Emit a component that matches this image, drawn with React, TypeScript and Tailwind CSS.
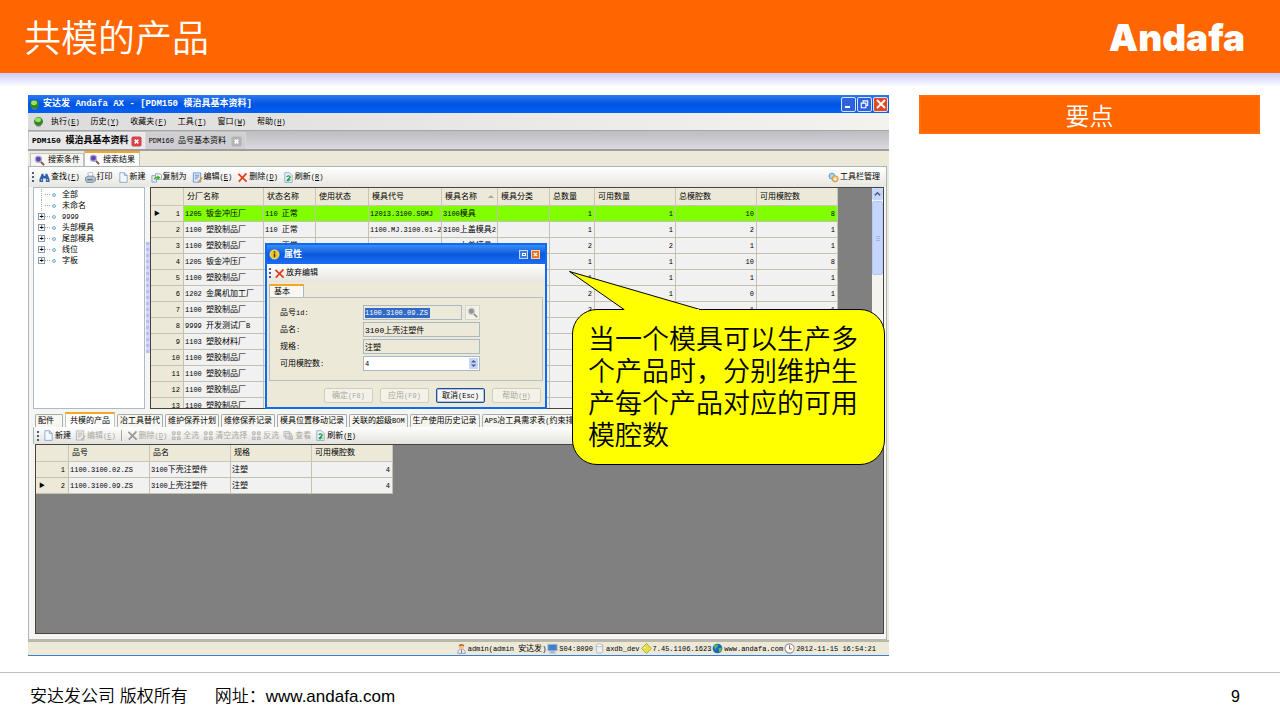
import React from "react"

const UI_FONT = "font-['Liberation_Mono','Noto_Sans_CJK_SC',monospace]"
const SLIDE_FONT = "font-['Noto_Sans_CJK_SC',sans-serif]"

// Latin runs are set one size smaller than the Chinese ones; "(X)" marks an access key.
function Txt({ children }: { children: string }) {
  const parts = children.split(/([\x20-\x7e]+)/).filter(Boolean)
  return (
    <span className="whitespace-pre">
      {parts.map((part, i) => {
        if (!/^[\x20-\x7e]+$/.test(part)) return <span key={i}>{part}</span>
        const key = part.match(/^\(([A-Z])\)$/)
        return (
          <span key={i} className="text-[7px]">
            {key ? <>(<u>{key[1]}</u>)</> : part}
          </span>
        )
      })}
    </span>
  )
}

type IconName =
  | "ball" | "search" | "find" | "print" | "doc" | "copy" | "edit" | "delete" | "refresh"
  | "gears" | "info" | "user" | "monitor" | "db" | "tag" | "globe" | "clock" | "all" | "view"

const shapes: Record<IconName, React.ReactNode> = {
  ball: (
    <>
      <ellipse cx="6" cy="6" rx="4.9" ry="4.8" fill="#2f8a1e" />
      <ellipse cx="5.5" cy="4.2" rx="3.2" ry="2.6" fill="#9be06a" />
      <path d="M3 10h6l-1 1.5H4z" fill="#777" />
    </>
  ),
  search: (
    <>
      <path d="M7 7l4 4" stroke="#7a5236" strokeWidth="2" />
      <circle cx="4.8" cy="4.6" r="3.4" fill="#5c46b8" stroke="#b9b4d6" strokeWidth="1.4" />
    </>
  ),
  find: (
    <>
      <path d="M3 2h2v2h2V2h2l2.5 6v3H7.500V7h-3v4H.5V8z" fill="#2f62a8" />
      <path d="M2 8.500h1.500M8.500 8.500H10" stroke="#bcd6f5" strokeWidth="1.4" />
    </>
  ),
  print: (
    <>
      <path d="M3 1l5-.5 1 5H4z" fill="#fff" stroke="#8da4bf" strokeWidth=".7" />
      <path d="M.5 6l3-1.500h6l2 2v3l-3 2H2L.5 9z" fill="#b5bfcc" stroke="#67778c" strokeWidth=".8" />
      <path d="M2.500 8.500h6" stroke="#41669a" strokeWidth="1.2" />
    </>
  ),
  doc: <path d="M2 .8h5l3 3v7.500H2zM7 .8v3h3" fill="#f3f8ff" stroke="#7e9fc9" strokeWidth=".9" />,
  copy: (
    <>
      <path d="M1 4h5v7H1z" fill="#e7edf7" stroke="#7e93bd" strokeWidth=".9" />
      <path d="M5 2h5l1.500 1.500V8H5z" fill="#fff" stroke="#7e93bd" strokeWidth=".9" />
      <path d="M3 9c0-3 2-4 4-4V3.500L10.500 6 7 8.800V7.200C5.500 7.200 4 7.500 3 9z" fill="#3fae2b" />
    </>
  ),
  edit: (
    <>
      <path d="M1.500 1h8v10h-8z" fill="#eaf3ff" stroke="#4f86cd" strokeWidth=".9" />
      <path d="M3 3.500h5M3 5.500h5M3 7.500h3" stroke="#4f86cd" />
      <path d="M6 10.500l4.500-5 1.200 1.200-4.200 4.500z" fill="#f08b24" />
    </>
  ),
  delete: <path d="M1.500 2L10.500 10.500M10.300 1.500L2 10.500" stroke="#e23d1d" strokeWidth="1.900" />,
  refresh: (
    <>
      <path d="M2 .8h5l3 3v7.500H2z" fill="#eef5ff" stroke="#7e9fc9" strokeWidth=".9" />
      <path d="M4 5.500c.5-1.800 3.500-1.800 4 0l-3 3H8.300M4.200 8.500L6 10.200" stroke="#1e9c33" strokeWidth="1.300" fill="none" />
    </>
  ),
  gears: (
    <>
      <circle cx="4.300" cy="4.500" r="3.200" fill="#a9d4ee" stroke="#4f9ac6" />
      <circle cx="7.800" cy="7.500" r="3.300" fill="#f3cf8a" stroke="#c99646" />
      <circle cx="7.800" cy="7.500" r="1" fill="#fff" />
    </>
  ),
  info: (
    <>
      <circle cx="6" cy="6" r="5" fill="#f6c51c" stroke="#fff3b0" strokeWidth=".8" />
      <path d="M6 2.500v1.500M6 5v4" stroke="#3a3520" strokeWidth="1.600" />
    </>
  ),
  user: (
    <>
      <path d="M2 11.500c0-4 1.500-5 4-5s4 1 4 5z" fill="#dfe9f8" stroke="#6a87b5" strokeWidth=".7" />
      <path d="M6 7v4" stroke="#d2502a" />
      <circle cx="6" cy="4" r="2.800" fill="#f1c08e" />
      <path d="M3 3.500C3 .3 9 .3 9 3.500 7 2.500 5 3 3 3.500z" fill="#b0692a" />
    </>
  ),
  monitor: (
    <>
      <path d="M1 1.500h10v7H1z" fill="#3f7fd0" stroke="#9fb5d0" />
      <path d="M4 8.500h4v1.500h1.500v1.500h-7V10H4z" fill="#a9b6c6" />
    </>
  ),
  db: (
    <>
      <path d="M2.500 2.500v7c0 2 7 2 7 0v-7" fill="#eceef2" stroke="#a0a5b0" strokeWidth=".8" />
      <ellipse cx="6" cy="2.500" rx="3.500" ry="1.500" fill="#fff" stroke="#a0a5b0" strokeWidth=".8" />
    </>
  ),
  tag: (
    <>
      <path d="M6 .5L11.500 6 6 11.500.5 6z" fill="#e3df4c" stroke="#a19a25" strokeWidth=".8" />
      <circle cx="4" cy="5" r=".9" fill="#fff" />
    </>
  ),
  globe: (
    <>
      <circle cx="6" cy="6" r="5.300" fill="#1f66c4" />
      <path d="M2 3c2-2 4-1.500 5-.5L5 5 3.500 7.500zM7 6l3.500-1v3L8 10.500z" fill="#58c046" />
    </>
  ),
  clock: (
    <>
      <circle cx="6" cy="6" r="5" fill="#fff" stroke="#8f949e" strokeWidth="1.200" />
      <path d="M6 2.500V6.500H8.500" stroke="#c03a2a" fill="none" />
    </>
  ),
  all: <path d="M1.500 2h3v3h-3zM7 2h3v3H7zM1.500 7.500h3v3h-3zM7 7.500h3v3H7z" fill="#d4d4cf" stroke="#888" />,
  view: (
    <>
      <path d="M1 1.500h6v6H1zM3 3.500h6v6H3z" fill="#deded8" stroke="#888" strokeWidth=".9" />
      <path d="M6 6h5v5H6z" fill="#a8a8a2" />
    </>
  ),
}

function Icon({ name, off }: { name: IconName; off?: boolean }) {
  return (
    <svg viewBox="0 0 12 12" className={off ? "size-[11px] shrink-0 opacity-60 grayscale" : "size-[11px] shrink-0"}>
      {shapes[name]}
    </svg>
  )
}

interface ToolItem {
  icon: IconName
  label: string
  off?: boolean
}

function ToolButton({ icon, label, off }: ToolItem) {
  return (
    <button
      type="button"
      disabled={off}
      className={off ? "flex shrink-0 items-center gap-px text-[#aaa89c]" : "flex shrink-0 items-center gap-px"}
    >
      <Icon name={icon} off={off} />
      <Txt>{label}</Txt>
    </button>
  )
}

function Grip() {
  return <span className="h-[10px] w-0 border-l-2 border-dotted border-[#4b5a86]" />
}

const menus = ["执行(E)", "历史(Y)", "收藏夹(F)", "工具(T)", "窗口(W)", "帮助(H)"]

const tools: ToolItem[] = [
  { icon: "find", label: "查找(F)" },
  { icon: "print", label: "打印" },
  { icon: "doc", label: "新建" },
  { icon: "copy", label: "复制为" },
  { icon: "edit", label: "编辑(E)" },
  { icon: "delete", label: "删除(D)" },
  { icon: "refresh", label: "刷新(R)" },
]

const detailTools: ToolItem[] = [
  { icon: "delete", label: "删除(D)", off: true },
  { icon: "all", label: "全选", off: true },
  { icon: "all", label: "清空选择", off: true },
  { icon: "all", label: "反选", off: true },
  { icon: "view", label: "查看", off: true },
  { icon: "refresh", label: "刷新(R)" },
]

const tree = ["全部", "未命名", "9999", "头部模具", "尾部模具", "线位", "字板"]

const columns = [
  { title: "分厂名称", width: "w-[80px]" },
  { title: "状态名称", width: "w-[52px]" },
  { title: "使用状态", width: "w-[53px]" },
  { title: "模具代号", width: "w-[73px]" },
  { title: "模具名称", width: "w-[56px]" },
  { title: "模具分类", width: "w-[52px]" },
  { title: "总数量", width: "w-[45px]" },
  { title: "可用数量", width: "w-[81px]" },
  { title: "总模腔数", width: "w-[81px]" },
  { title: "可用模腔数", width: "w-[81px]" },
]

const molds = [
  ["1205 钣金冲压厂", "110 正常", "", "12013.3100.SGMJ", "3100模具", "", "1", "1", "10", "8"],
  ["1100 塑胶制品厂", "110 正常", "", "1100.MJ.3100.01-2", "3100上盖模具2", "", "1", "1", "2", "1"],
  ["1100 塑胶制品厂", "110 正常", "", "1100.MJ.3100.01-3", "3100上盖模具3", "", "2", "2", "1", "1"],
  ["1205 钣金冲压厂", "", "", "", "", "", "1", "1", "10", "8"],
  ["1100 塑胶制品厂", "", "", "", "", "", "1", "1", "1", "1"],
  ["1202 金属机加工厂", "", "", "", "", "", "2", "1", "0", "1"],
  ["1100 塑胶制品厂", "", "", "", "", "", "2", "2", "1", "1"],
  ["9999 开发测试厂B", "", "", "", "", "", "", "", "", ""],
  ["1103 塑胶材料厂", "", "", "", "", "", "", "", "", ""],
  ["1100 塑胶制品厂", "", "", "", "", "", "", "", "", ""],
  ["1100 塑胶制品厂", "", "", "", "", "", "", "", "", ""],
  ["1100 塑胶制品厂", "", "", "", "", "", "", "", "", ""],
  ["1100 塑胶制品厂", "", "", "", "", "", "", "", "", ""],
]

const products = [
  ["1100.3100.02.ZS", "3100下壳注塑件", "注塑", "4"],
  ["1100.3100.09.ZS", "3100上壳注塑件", "注塑", "4"],
]

const detailTabs = [
  "配件", "共模的产品", "冶工具替代", "维护保养计划", "维修保养记录",
  "模具位置移动记录", "关联的超级BOM", "生产使用历史记录", "APS冶工具需求表(约束排程)",
]

const headCell = "border-r border-b border-[#c9c6b6] bg-[#ece9d8] p-0 text-left font-normal"

function RowHead({ n, current }: { n: number; current: boolean }) {
  return (
    <th scope="row" className="h-4 border-r border-b border-[#c4c1af] bg-[#ece9d8] p-0 font-normal">
      <span className="flex items-center justify-between px-[3px]">
        <span className="text-[6px]">{current ? "▶" : ""}</span>
        <Txt>{String(n)}</Txt>
      </span>
    </th>
  )
}

function MoldGrid() {
  return (
    <table className="w-[687px] shrink-0 table-fixed border-separate border-spacing-0 self-start">
      <thead>
        <tr className="h-[18px]">
          <th className={`${headCell} w-[33px]`} />
          {columns.map((c) => (
            <th key={c.title} className={`${headCell} ${c.width}`}>
              <span className="flex items-center justify-between px-[3px]">
                <Txt>{c.title}</Txt>
                {c.title === "模具名称" && (
                  <span className="border-x-[3px] border-b-[3px] border-x-transparent border-b-[#aca899]" />
                )}
              </span>
            </th>
          ))}
        </tr>
      </thead>
      <tbody>
        {molds.map((row, r) => (
          <tr key={r} className={r === 0 ? "bg-[#80ff00]" : "bg-[#f1f1f1]"}>
            <RowHead n={r + 1} current={r === 0} />
            {row.map((cell, c) => (
              <td
                key={c}
                className={
                  c > 5
                    ? "h-4 overflow-hidden border-r border-b border-[#c4c1af] p-0 pr-[2px] text-right"
                    : "h-4 overflow-hidden border-r border-b border-[#c4c1af] p-0 pl-px"
                }
              >
                <Txt>{cell}</Txt>
              </td>
            ))}
          </tr>
        ))}
      </tbody>
    </table>
  )
}

function ProductGrid() {
  return (
    <table className="w-[357px] table-fixed border-separate border-spacing-0">
      <thead>
        <tr className="h-[17px]">
          <th className={`${headCell} w-[33px]`} />
          {["品号", "品名", "规格", "可用模腔数"].map((t) => (
            <th key={t} className={`${headCell} w-[81px] pl-[3px]`}>
              <Txt>{t}</Txt>
            </th>
          ))}
        </tr>
      </thead>
      <tbody>
        {products.map((row, r) => (
          <tr key={r} className="bg-[#f1f1f1]">
            <RowHead n={r + 1} current={r === 1} />
            {row.map((cell, c) => (
              <td
                key={c}
                className={
                  c === 3
                    ? "h-4 border-r border-b border-[#c4c1af] p-0 pr-[2px] text-right"
                    : "h-4 border-r border-b border-[#c4c1af] p-0 pl-px"
                }
              >
                <Txt>{cell}</Txt>
              </td>
            ))}
          </tr>
        ))}
      </tbody>
    </table>
  )
}

function Tree() {
  return (
    <ul className="w-[112px] shrink-0 border border-[#a9bccf] bg-white pt-px">
      {tree.map((t, i) => (
        <li key={t} className="flex h-[11px] items-center pl-1">
          {i > 1 ? (
            <span className="flex size-[7px] items-center justify-center border border-[#8b9bb0] bg-white text-[7px] font-bold">+</span>
          ) : (
            <span className="ml-[3px] h-[11px] w-1 border-l border-dotted border-[#aaa]" />
          )}
          <span className="w-[5px] border-t border-dotted border-[#aaa]" />
          <span className="mr-[6px] ml-[2px] size-1 rounded-full border border-[#7fb0cf] bg-[#d8eef8]" />
          <Txt>{t}</Txt>
        </li>
      ))}
    </ul>
  )
}

function Scrollbar() {
  return (
    <div className="ml-auto flex w-[11px] flex-col bg-[#f4f3ee]">
      <div className="flex h-[12px] items-center justify-center rounded-xs bg-[#c6d5fb]">
        <svg viewBox="0 0 8 6" className="w-[7px]">
          <path d="M1 5l3-3 3 3" fill="none" stroke="#4d6185" strokeWidth="1.700" />
        </svg>
      </div>
      <div className="mt-px flex h-[74px] flex-col items-center justify-center gap-px rounded-xs border border-[#b4c8f6] bg-[#c6d5fb]">
        <span className="h-px w-1 bg-[#9db5ee]" />
        <span className="h-px w-1 bg-[#9db5ee]" />
        <span className="h-px w-1 bg-[#9db5ee]" />
      </div>
    </div>
  )
}

const field = "h-[15px] border border-[#a9b8c2] px-px text-[8px] outline-none"

function PropertyDialog() {
  return (
    <div className="flex h-[166px] w-[282px] flex-col border-2 border-[#0d6bf2] bg-[#ece9d8]">
      <div className="flex h-[19px] items-center bg-linear-to-b from-[#3a8cf5] via-[#0a59de] to-[#1c6cf5] px-[2px] text-white">
        <Icon name="info" />
        <span className="ml-1 text-[9px] font-bold">属性</span>
        <button type="button" aria-label="还原" className="ml-auto flex size-[9px] items-center justify-center border border-[#c3d8fb] bg-[#3d7ae6]">
          <span className="h-[3px] w-[4px] border border-white" />
        </button>
        <button type="button" aria-label="关闭" className="mr-[3px] ml-[3px] flex size-[9px] items-center justify-center border border-[#fbd3a0] bg-[#e8701a]">
          <svg viewBox="0 0 6 6" className="size-[5px]">
            <path d="M1 1l4 4M5 1L1 5" stroke="#fff" strokeWidth="1.500" />
          </svg>
        </button>
      </div>
      <div className="flex h-[18px] items-center gap-[3px] bg-linear-to-b from-white to-[#e6e5df] px-[2px]">
        <Grip />
        <ToolButton icon="delete" label="放弃编辑" />
      </div>
      <div className="flex px-[2px] pt-[2px]">
        <span className="flex h-[13px] w-[35px] items-center border-x border-t-2 border-x-[#a9b8c2] border-t-[#f5a623] bg-[#f8f7f2] pl-1">
          <Txt>基本</Txt>
        </span>
      </div>
      <form className="mx-[2px] grid h-[84px] grid-cols-[83px_1fr] content-start gap-y-[2px] border border-[#b3bdc2] pt-[7px] pl-[10px]">
        <label htmlFor="item-id" className="self-center"><Txt>品号id:</Txt></label>
        <div className="flex gap-[3px]">
          <span className={`${field} flex w-[99px] items-center`}>
            <input id="item-id" readOnly defaultValue="1100.3100.09.ZS" className="w-[65px] bg-[#316ac5] text-[7px] text-white outline-none" />
          </span>
          <button type="button" aria-label="查询" className="flex size-[15px] items-center justify-center border border-[#d8d4c4] bg-[#f3f2ea]">
            <Icon name="search" off />
          </button>
        </div>
        <label htmlFor="item-name" className="self-center"><Txt>品名:</Txt></label>
        <input id="item-name" readOnly defaultValue="3100上壳注塑件" className={`${field} w-[117px]`} />
        <label htmlFor="spec" className="self-center"><Txt>规格:</Txt></label>
        <input id="spec" readOnly defaultValue="注塑" className={`${field} w-[117px]`} />
        <label htmlFor="cavities" className="self-center"><Txt>可用模腔数:</Txt></label>
        <div className="flex w-[117px] border border-[#a9b8c2] bg-white">
          <input id="cavities" defaultValue="4" className="h-[13px] min-w-0 flex-1 px-px text-[7px] outline-none" />
          <button type="button" aria-label="调整" className="m-px flex w-[9px] items-center justify-center bg-[#c6d5fb]">
            <svg viewBox="0 0 8 10" className="h-[9px]">
              <path d="M4 1l3 3H1zM4 9L1 6h6z" fill="#4d6185" />
            </svg>
          </button>
        </div>
      </form>
      <div className="mt-[7px] flex justify-end gap-[7px] pr-1">
        {["确定(F8)", "应用(F9)", "取消(Esc)", "帮助(H)"].map((b) => (
          <button
            key={b}
            type="button"
            disabled={b !== "取消(Esc)"}
            className={
              b === "取消(Esc)"
                ? "h-[15px] w-[49px] rounded-xs border border-[#1d4f8c] bg-[#f6f5f0] ring-1 ring-[#a9c3ee] ring-inset"
                : "h-[15px] w-[49px] rounded-xs border border-[#d0cdbd] bg-[#f3f2e8] text-[#aca899]"
            }
          >
            <Txt>{b}</Txt>
          </button>
        ))}
      </div>
    </div>
  )
}

function TitleBar() {
  const ctl = "flex size-[15px] items-center justify-center rounded-xs border border-[#d5e2fb]"
  return (
    <div className="flex h-[18px] items-center bg-linear-to-b from-[#2a78ee] via-[#0054e3] to-[#0461f4] px-px text-white">
      <Icon name="ball" />
      <span className="ml-[3px] text-[9px] font-bold whitespace-pre">安达发 Andafa AX - [PDM150 模治具基本资料]</span>
      <div className="ml-auto flex gap-px">
        <button type="button" aria-label="最小化" className={`${ctl} bg-[#2d62dc]`}>
          <span className="mt-[6px] mr-[3px] h-[2px] w-[5px] bg-white" />
        </button>
        <button type="button" aria-label="还原" className={`${ctl} bg-[#2d62dc]`}>
          <svg viewBox="0 0 12 12" className="size-[11px]">
            <path d="M4.500 4V2h5v5h-2M2.500 4.500h5v5h-5z" fill="none" stroke="#fff" strokeWidth="1.200" />
          </svg>
        </button>
        <button type="button" aria-label="关闭" className={`${ctl} bg-[#e04a22]`}>
          <svg viewBox="0 0 12 12" className="size-[12px]">
            <path d="M2 2l8 8M10 2l-8 8" stroke="#fff" strokeWidth="1.800" />
          </svg>
        </button>
      </div>
    </div>
  )
}

function CloseMark({ active }: { active?: boolean }) {
  return (
    <svg viewBox="0 0 12 12" className="size-[11px]">
      <rect x=".5" y=".5" width="11" height="11" rx="2" fill={active ? "#d8434a" : "#b3b3b3"} />
      <path d="M4 4l4 4M8 4L4 8" stroke="#fff" strokeWidth="1.800" />
    </svg>
  )
}

function StatusItem({ icon, label }: { icon: IconName; label: string }) {
  return (
    <span className="flex items-center gap-px">
      <Icon name={icon} />
      <Txt>{label}</Txt>
    </span>
  )
}

function AppWindow() {
  return (
    <div className={`${UI_FONT} relative flex min-w-0 flex-col bg-[#ece9d8] text-[8px] leading-[10px] text-black`}>
      <TitleBar />
      <nav className="flex h-[17px] items-center gap-[7px] bg-linear-to-r from-[#dcdcdc] to-[#f3f3ee] pl-[5px]">
        <Icon name="ball" />
        <div className="flex gap-[11px]">
          {menus.map((m) => (
            <button key={m} type="button"><Txt>{m}</Txt></button>
          ))}
        </div>
      </nav>
      <div className="flex h-[21px] items-end border-t border-b-2 border-t-[#a6a6a6] border-b-[#9d9d9f] bg-linear-to-b from-[#bdbdc1] to-[#dadade] pl-px">
        <div className="flex h-[17px] items-center gap-[2px] border border-b-0 border-[#eee] bg-[#e9e9ea] px-[2px] font-bold">
          <span className="whitespace-pre">PDM150 <span className="text-[9px]">模治具基本资料</span></span>
          <CloseMark active />
        </div>
        <div className="flex h-[17px] items-center gap-[5px] border border-b-0 border-[#d6d6d8] bg-[#cfcfd2] px-[3px]">
          <Txt>PDM160 品号基本资料</Txt>
          <CloseMark />
        </div>
      </div>
      <div className="flex h-[15px] items-end pl-[2px]">
        <span className="flex h-[13px] items-center gap-[3px] border border-b-0 border-[#bcc4c6] bg-[#f7f6f1] px-[3px]">
          <Icon name="search" />
          <Txt>搜索条件</Txt>
        </span>
        <span className="flex h-[15px] items-center gap-[3px] border-x border-t-2 border-x-[#bcc4c6] border-t-[#f5a623] bg-white px-[4px]">
          <Icon name="search" />
          <Txt>搜索结果</Txt>
        </span>
      </div>
      <div className="mr-[2px] flex flex-1 flex-col border-x border-t border-[#a9b5bd] bg-[#f6f5f0]">
        <div className="flex h-[20px] items-center gap-[5px] bg-linear-to-b from-white to-[#e7e6e0] pr-[6px] pl-[3px]">
          <Grip />
          {tools.map((t) => (
            <ToolButton key={t.label} {...t} />
          ))}
          <div className="ml-auto">
            <ToolButton icon="gears" label="工具栏管理" />
          </div>
        </div>
        <div className="flex h-[222px] overflow-hidden pr-[2px] pl-1">
          <Tree />
          <div className="w-[5px] shrink-0 pt-[55px]">
            <div className="ml-px h-[111px] border-l-3 border-dotted border-[#b9bdf0] bg-[#d5d7fb]" />
          </div>
          <div className="flex min-w-0 flex-1 overflow-hidden border border-[#444] bg-[#808080]">
            <MoldGrid />
            <Scrollbar />
          </div>
        </div>
        <div className="mt-[3px] flex h-[15px] items-end gap-[2px] overflow-hidden pr-[3px] pl-[6px]">
          {detailTabs.map((t) => (
            <span
              key={t}
              className={
                t === "共模的产品"
                  ? "flex h-[15px] shrink-0 items-center border-x border-t-2 border-x-[#bcc4c6] border-t-[#f5a623] bg-white px-1"
                  : t === "配件"
                    ? "flex h-[13px] w-[28px] shrink-0 items-center rounded-t-xs border border-b-0 border-[#a4adb0] bg-[#f7f6f1] px-[2px]"
                    : "flex h-[13px] shrink-0 items-center rounded-t-xs border border-b-0 border-[#a4adb0] bg-[#f7f6f1] px-[2px]"
              }
            >
              <Txt>{t}</Txt>
            </span>
          ))}
        </div>
        <div className="mx-1 flex h-[17px] items-center gap-1 border-l border-[#a9b5bd] bg-linear-to-b from-white to-[#e3e2dc] pl-[3px]">
          <Grip />
          <ToolButton icon="doc" label="新建" />
          <ToolButton icon="edit" label="编辑(E)" off />
          <span className="mx-px h-[11px] w-px bg-[#aaa89c]" />
          {detailTools.map((t) => (
            <ToolButton key={t.label} {...t} />
          ))}
        </div>
        <div className="mr-[2px] ml-[6px] flex-1 border border-[#444] bg-[#808080]">
          <ProductGrid />
        </div>
        <div className="h-[6px] border-b border-[#b8b8b0]" />
      </div>
      <div className="flex h-[16px] items-center justify-end gap-px border-t-2 border-b border-t-[#b9b7a8] border-b-[#3c7fd0] pr-[13px]">
        <StatusItem icon="user" label="admin(admin 安达发)" />
        <StatusItem icon="monitor" label="S04:8090" />
        <StatusItem icon="db" label="axdb_dev" />
        <StatusItem icon="tag" label="7.45.1106.1623" />
        <StatusItem icon="globe" label="www.andafa.com" />
        <StatusItem icon="clock" label="2012-11-15 16:54:21" />
      </div>
      <div className="absolute top-[148px] left-[237px]">
        <PropertyDialog />
      </div>
      <Callout />
    </div>
  )
}

function Callout() {
  return (
    <div className={`${SLIDE_FONT} absolute top-[214px] left-[544px] w-[313px] rounded-[25px] border border-black bg-[#ffff00] px-[15px] pt-3 pb-[14px] text-[27px] leading-8 font-[350]`}>
      <svg viewBox="0 0 140 40" className="absolute -top-[39px] -left-1 w-[140px]">
        <path d="M55 38.500L.5 .5 131 38.500" fill="#ffff00" stroke="#000" />
        <path d="M55.500 39H130" stroke="#ffff00" strokeWidth="2" />
      </svg>
      当一个模具可以生产多个产品时，分别维护生产每个产品对应的可用模腔数
    </div>
  )
}

export default function App() {
  return (
    <div lang="zh-CN" className={`${SLIDE_FONT} flex min-h-screen flex-col bg-white`}>
      <header className="flex h-[73px] items-center justify-between bg-[#ff6600] pr-[35px] pl-6 text-white">
        <h1 className="text-[37px] font-[350]">共模的产品</h1>
        <span className="pt-[2px] font-['Inter',sans-serif] text-[37px] font-black">Andafa</span>
      </header>
      <div className="h-[14px] bg-linear-to-b from-[#ccccff] to-white" />
      <main className="grid flex-1 grid-cols-[861fr_341fr] gap-[30px] pt-2 pr-5 pb-4 pl-7">
        <AppWindow />
        <aside>
          <h2 className="border-2 border-[#ff6d0c] bg-[#ff6600] text-center text-[24px] leading-[35px] font-[350] text-white">要点</h2>
        </aside>
      </main>
      <footer className="flex h-12 items-center justify-between border-t border-[#bfbfbf] pr-10 pl-[30px] text-[17px]">
        <p className="font-['Liberation_Sans','Noto_Sans_CJK_SC',sans-serif] font-[350] whitespace-pre">
          安达发公司 版权所有<span className="ml-[27px]">网址：</span>
          <a href="http://www.andafa.com" className="font-normal">www.andafa.com</a>
        </p>
        <span className="font-['Liberation_Sans',sans-serif] text-base">9</span>
      </footer>
    </div>
  )
}
